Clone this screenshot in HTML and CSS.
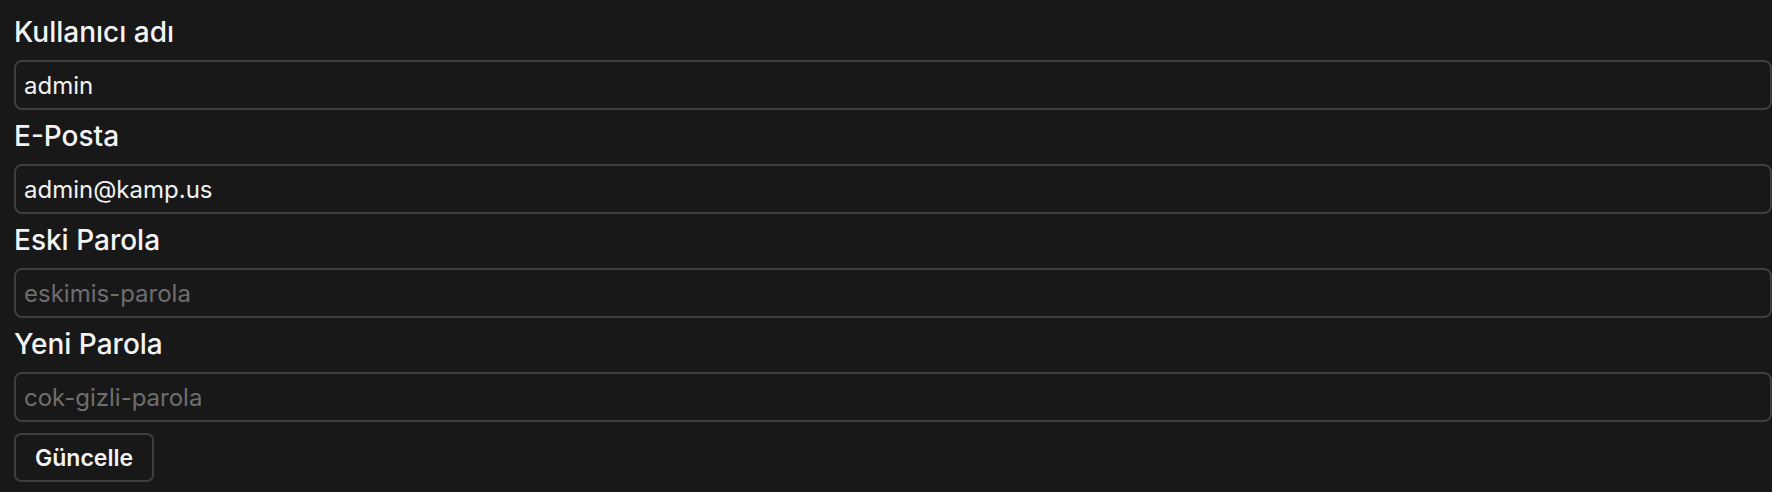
FILE: index.html
```html
<!DOCTYPE html>
<html lang="tr">
<head>
<meta charset="utf-8">
<title>Profil</title>
<link rel="stylesheet" href="styles.css">
</head>
<body>
<form class="form">
  <div class="field">
    <label class="label" for="u">Kullanıcı adı</label>
    <input class="input" id="u" type="text" value="admin">
  </div>
  <div class="field">
    <label class="label" for="e">E-Posta</label>
    <input class="input" id="e" type="text" value="admin@kamp.us">
  </div>
  <div class="field">
    <label class="label" for="o">Eski Parola</label>
    <input class="input" id="o" type="password" placeholder="eskimis-parola">
  </div>
  <div class="field">
    <label class="label" for="n">Yeni Parola</label>
    <input class="input" id="n" type="password" placeholder="cok-gizli-parola">
  </div>
  <div class="actions">
    <button class="button" type="button">Güncelle</button>
  </div>
</form>
</body>
</html>
```
FILE: styles.css
```css
html, body {
  margin: 0;
  padding: 0;
  background: #181818;
  overflow: hidden;
}
body {
  font-family: Inter, "Noto Sans", sans-serif;
  color: #f2f2f2;
}
.form {
  display: flex;
  flex-direction: column;
  gap: 8px;
  padding: 14px 0 0 14px;
}
.field {
  display: flex;
  flex-direction: column;
  gap: 10px;
}
.label {
  font-size: 28px;
  font-weight: 500;
  line-height: 36px;
  color: #f4f4f4;
}
.input {
  box-sizing: border-box;
  width: 100%;
  height: 50px;
  margin: 0;
  padding: 0 8px;
  background: #181818;
  border: 2px solid #3e3e3e;
  border-radius: 8px;
  color: #f2f2f2;
  font-family: Inter, "Noto Sans", sans-serif;
  font-size: 24px;
  outline: none;
}
.input::placeholder {
  color: #6e6e6e;
}
.actions {
  display: flex;
  padding-top: 3px;
}
.button {
  box-sizing: border-box;
  height: 49px;
  padding: 0 19px;
  background: #181818;
  border: 2px solid #3e3e3e;
  border-radius: 7px;
  color: #f2f2f2;
  font-family: Inter, "Noto Sans", sans-serif;
  font-size: 23px;
  font-weight: 600;
}
```
